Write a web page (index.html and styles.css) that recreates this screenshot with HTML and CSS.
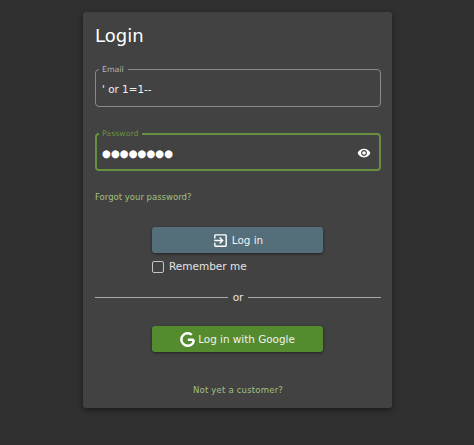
FILE: index.html
```html
<!DOCTYPE html>
<html lang="en">
<head>
<meta charset="utf-8">
<title>Login</title>
<link rel="stylesheet" href="styles.css">
</head>
<body>
<main class="card">
  <h1 class="title">Login</h1>
  <fieldset class="field field-email">
    <legend class="legend">Email</legend>
    <div class="value">' or 1=1--</div>
  </fieldset>
  <fieldset class="field field-password">
    <legend class="legend">Password</legend>
    <div class="value dots">●●●●●●●●</div>
    <svg class="eye" viewBox="0 0 24 24" width="14" height="14"><path fill="#fff" d="M12 4.5C7 4.5 2.73 7.61 1 12c1.73 4.39 6 7.5 11 7.5s9.27-3.11 11-7.5c-1.73-4.39-6-7.5-11-7.5zM12 17c-2.76 0-5-2.24-5-5s2.24-5 5-5 5 2.24 5 5-2.24 5-5 5zm0-8c-1.66 0-3 1.34-3 3s1.34 3 3 3 3-1.34 3-3-1.34-3-3-3z"/></svg>
  </fieldset>
  <a class="link forgot">Forgot your password?</a>
  <div class="actions">
    <button class="btn btn-login">
      <svg viewBox="0 0 24 24" width="17" height="17"><path fill="#fff" d="M10.09 15.59L11.5 17l5-5-5-5-1.41 1.41L12.67 11H3v2h9.67l-2.58 2.59zM19 3H5c-1.11 0-2 .9-2 2v4h2V5h14v14H5v-4H3v4c0 1.1.89 2 2 2h14c1.1 0 2-.9 2-2V5c0-1.1-.9-2-2-2z"/></svg>
      <span>Log in</span>
    </button>
    <label class="remember"><span class="box"></span>Remember me</label>
  </div>
  <div class="divider"><span class="rule"></span><span class="or">or</span><span class="rule"></span></div>
  <div class="actions">
    <button class="btn btn-google">
      <svg viewBox="0 0 24 24" width="15" height="15"><path fill="none" stroke="#fff" stroke-width="4" d="M22 12.5H12.5M22 12.5c0 5.5-4 9.5-9.8 9.5a10 10 0 0 1 0-20c2.8 0 5 1 6.6 2.6"/></svg>
      <span>Log in with Google</span>
    </button>
  </div>
  <a class="link customer">Not yet a customer?</a>
</main>
</body>
</html>
```
FILE: styles.css
```css
* { box-sizing: border-box; }
html, body { margin: 0; height: 100%; }
body {
  background: #303030;
  font-family: "DejaVu Sans", sans-serif;
  color: #fff;
  padding-top: 12px;
}
.card {
  width: 309px;
  height: 396px;
  margin-left: 83px;
  padding: 12px 11px 12px 12px;
  background: #424242;
  border-radius: 3px;
  box-shadow: 0 2px 6px rgba(0,0,0,.45);
  display: flex;
  flex-direction: column;
}
.card > * { flex: none; }
.title {
  margin: 0;
  font-size: 18px;
  font-weight: 400;
  line-height: 23px;
  height: 39px;
}
.field {
  position: relative;
  margin: 0;
  padding: 0 0 0 6px;
  height: 42px;
  border: 1px solid #8a8a8a;
  border-radius: 4px;
  min-width: 0;
}
.legend {
  font-size: 7.8px;
  line-height: 9px;
  height: 9px;
  padding: 0 4px 0 3px;
  margin-left: -3px;
  color: #b5b5b5;
}
.value {
  font-size: 10.4px;
  line-height: 14px;
  margin-top: 8px;
  color: #f0f0f0;
}
.field-email { margin-top: 2px; }
.field-password {
  margin-top: 22px;
  border: 2px solid #66903f;
  padding-left: 5px;
}
.field-password .legend {
  color: #66903f;
  line-height: 10px;
  height: 10px;
}
.dots {
  font-size: 10.2px;
  color: #fff;
  margin-top: 8px;
}
.eye {
  position: absolute;
  right: 8px;
  top: 7px;
}
.link {
  color: #a0c080;
  font-size: 8.5px;
  line-height: 11px;
}
.forgot { margin-top: 21px; }
.actions {
  width: 171px;
  margin: 24px 0 0 57px;
}
.btn {
  width: 100%;
  height: 26px;
  border: 0;
  border-radius: 3px;
  padding: 0;
  font-family: inherit;
  font-size: 10.4px;
  color: #f2f2f2;
  display: flex;
  align-items: center;
  justify-content: center;
  gap: 3px;
  box-shadow: 0 1px 3px rgba(0,0,0,.5);
}
.btn-login { background: #546e7a; }
.btn-google { background: #558b2f; gap: 3px; }
.remember {
  display: flex;
  align-items: center;
  gap: 5px;
  margin-top: 7px;
  font-size: 10.5px;
  line-height: 13px;
  color: #e4e4e4;
}
.box {
  width: 12px;
  height: 12px;
  border: 1.5px solid #c4c4c4;
  border-radius: 2px;
}
.divider {
  display: flex;
  align-items: center;
  gap: 5px;
  margin-top: 17px;
  height: 14px;
}
.rule { flex: 1; height: 1px; background: #a8a8a8; }
.or { font-size: 10.5px; line-height: 14px; color: #e4e4e4; }
.divider + .actions { margin-top: 22px; }
.customer {
  margin-top: 33px;
  text-align: center;
  letter-spacing: .2px;
}
```
